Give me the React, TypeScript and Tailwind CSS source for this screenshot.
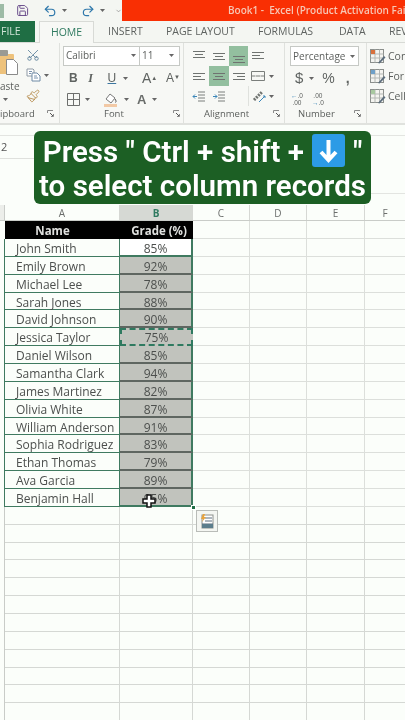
import { Save, Undo2, Redo2, Scissors, Paintbrush, ChevronDown } from 'lucide-react'

const students = [
  ['John Smith', '85%'],
  ['Emily Brown', '92%'],
  ['Michael Lee', '78%'],
  ['Sarah Jones', '88%'],
  ['David Johnson', '90%'],
  ['Jessica Taylor', '75%'],
  ['Daniel Wilson', '85%'],
  ['Samantha Clark', '94%'],
  ['James Martinez', '82%'],
  ['Olivia White', '87%'],
  ['William Anderson', '91%'],
  ['Sophia Rodriguez', '83%'],
  ['Ethan Thomas', '79%'],
  ['Ava Garcia', '89%'],
  ['Benjamin Hall', '95%'],
]

const emptyRows = Array.from({ length: 12 })

function Caret({ className = '' }: { className?: string }) {
  return (
    <svg width="5" height="3" viewBox="0 0 5 3" className={`shrink-0 ${className}`}>
      <path d="M0 0h5L2.5 3z" fill="#666" />
    </svg>
  )
}

function Launcher() {
  return (
    <svg width="7" height="7" viewBox="0 0 7 7">
      <path d="M.5 3V.5H6M6.5 4v2.5H4" fill="none" stroke="#8a8a8a" />
      <path d="M3 3l3 3" stroke="#555" />
    </svg>
  )
}

// rows of text lines, the alignment buttons in the ribbon
function Lines({ align = 'center', rows = 3, y = 4 }: { align?: string; rows?: number; y?: number }) {
  const widths = align === 'full' ? [12, 12, 12, 12] : [12, 8, 12, 8]
  return (
    <svg width="14" height="14" viewBox="0 0 14 14">
      {widths.slice(0, rows).map((w, i) => {
        const x = align === 'right' ? 13 - w : align === 'left' || align === 'full' ? 1 : 7 - w / 2
        return <rect key={i} x={x} y={y + i * 3} width={w} height="1" fill="#6f7370" />
      })}
    </svg>
  )
}

function Indent({ flip = false }: { flip?: boolean }) {
  return (
    <svg width="14" height="14" viewBox="0 0 14 14">
      <path d="M6 3h7M6 6h7M6 9h7M6 12h7" stroke="#7b7f7c" />
      <path d={flip ? 'M1 7.5h4M3 5.5l2 2-2 2' : 'M1 7.5h4M3 5.5l-2 2 2 2'} fill="none" stroke="#3c86b8" />
    </svg>
  )
}

function StyleIcon({ tone }: { tone: string }) {
  return (
    <svg width="16" height="15" viewBox="0 0 16 15" className="shrink-0">
      <rect x=".5" y=".5" width="13" height="13" fill="#f4f4f0" stroke="#8b8f8c" />
      <path d="M.5 5h13M.5 9h13M5 .5v13M9.500 .5v13" stroke="#b4b7b4" />
      <rect x="1" y="1" width="4" height="4" fill={tone} />
      <path d="M8 14l6-7 1.500 1.500-6 6z" fill="#5c6d7c" />
    </svg>
  )
}

function PasteIcon() {
  return (
    <svg width="20" height="28" viewBox="0 0 20 28">
      <rect x="-6" y="5" width="20" height="20" rx="1" fill="#eec27c" />
      <rect x="-2" y="1" width="10" height="6" rx="1" fill="#9a9a94" />
      <path d="M6.500 10.500h7l4 4v11h-11z" fill="#fff" stroke="#8a8a8a" />
    </svg>
  )
}

function CopyIcon() {
  return (
    <svg width="15" height="14" viewBox="0 0 15 14">
      <path d="M1 1h6l1 1v6H1z" fill="#fff" stroke="#8f9aa5" />
      <path d="M6 5h5l3 3v5H6z" fill="#fff" stroke="#6f8aa5" />
      <path d="M3 3.500h3M3 5.500h2M8 8h3M8 10h4" stroke="#7b93ad" />
    </svg>
  )
}

function BordersIcon() {
  return (
    <svg width="13" height="13" viewBox="0 0 13 13">
      <path d="M.5.5h12v12H.5zM6.500.5v12M.5 6.500h12" fill="none" stroke="#6d6f6d" />
    </svg>
  )
}

function FillIcon() {
  return (
    <svg width="15" height="15" viewBox="0 0 15 15">
      <path d="M3 7l4-5 5 4-4 5z" fill="#fff" stroke="#7a7a7a" />
      <path d="M12 7c1 1.500 1.500 2.500.5 3.500" fill="none" stroke="#555" />
      <rect x="1" y="12" width="13" height="3" fill="#f2c9a5" />
    </svg>
  )
}

function OrientationIcon() {
  return (
    <svg width="15" height="15" viewBox="0 0 15 15">
      <path d="M2 11L10 3" stroke="#6f7370" strokeWidth="3" strokeDasharray="2 1" />
      <path d="M7 13l6-6M11 7h2v2" fill="none" stroke="#3c86b8" />
    </svg>
  )
}

function DownArrowTile() {
  return (
    <svg width="33" height="33" viewBox="0 0 33 33" className="mx-[8px] inline-block align-[-5px]">
      <rect width="33" height="33" rx="3" fill="#2c9be6" />
      <path d="M16.500 6v19M9 18l7.500 8 7.500-8" fill="none" stroke="#fff" strokeWidth="4" />
    </svg>
  )
}

function Ribbon() {
  return (
    <div className="flex h-[82px] border-b-2 border-[#e0e2de] bg-[#f7f8f5] text-[#5d605e]">
      {/* Clipboard */}
      <div className="flex w-[60px] shrink-0 flex-col border-r border-[#dfe1dd]">
        <div className="flex h-[66px]">
          <div className="flex w-[26px] flex-col pt-[6px] leading-none">
            <PasteIcon />
            <span className="mt-[4px] text-[10px]">aste</span>
            <Caret className="ml-[3px] mt-[7px]" />
          </div>
          <div className="flex flex-col gap-[6px] pt-[5px]">
            <Scissors size={14} strokeWidth={1.300} color="#47708f" className="-scale-x-100 rotate-90" />
            <div className="flex items-center gap-[3px]">
              <CopyIcon />
              <Caret />
            </div>
            <Paintbrush size={14} strokeWidth={1.500} color="#b58a4a" className="mt-[1px]" />
          </div>
        </div>
        <div className="flex items-center justify-between pr-[5px] text-[9.500px] leading-none">
          <span>ipboard</span>
          <Launcher />
        </div>
      </div>

      {/* Font */}
      <div className="flex w-[124px] shrink-0 flex-col border-r border-[#dfe1dd] pl-[3px] pr-[3px]">
        <div className="flex h-[66px] flex-col">
          <div className="mt-[3px] flex h-[20px] w-[117px] items-center border border-[#c6c9c5] bg-white text-[10px]">
            <span className="w-[67px] pl-[2px]">Calibri</span>
            <Caret className="mr-[3px]" />
            <span className="flex h-full flex-1 items-center justify-between border-l border-[#c6c9c5] px-[2px] pr-[5px]">
              11
              <Caret />
            </span>
          </div>
          <div className="mt-[3px] flex h-[19px] items-center font-['Liberation_Sans',sans-serif] text-[12px] text-[#5f6361]">
            <b className="ml-[6px] w-[20px]">B</b>
            <i className="w-[20px] font-['Liberation_Serif',serif] font-bold">I</i>
            <span className="w-[16px] underline decoration-[#3c76a0]">U</span>
            <Caret className="mr-[14px]" />
            <span className="w-[25px] text-[14px]">A<sup className="text-[6px]">▲</sup></span>
            <span className="text-[12px]">A<sup className="text-[6px]">▼</sup></span>
          </div>
          <div className="mt-[2px] flex h-[20px] items-center">
            <div className="ml-[4px] mr-[5px]"><BordersIcon /></div>
            <Caret className="mr-[13px]" />
            <FillIcon />
            <Caret className="ml-[6px] mr-[8px]" />
            <span className="font-['Liberation_Sans',sans-serif] text-[13px] font-bold text-[#6a6d6b]">A</span>
            <Caret className="ml-[6px]" />
          </div>
        </div>
        <div className="flex items-center text-[9.500px] leading-none">
          <span className="ml-[41px] flex-1">Font</span>
          <span className="mr-[0px]"><Launcher /></span>
        </div>
      </div>

      {/* Alignment */}
      <div className="flex w-[101px] shrink-0 flex-col border-r border-[#dfe1dd] pl-[5px] pr-[4px]">
        <div className="grid h-[60px] grid-cols-[20px_20px_19px_1fr] grid-rows-[20px_20px_20px] pt-[3px] [&>*]:flex [&>*]:items-center [&>*]:justify-center">
          <div><Lines y={2} /></div>
          <div><Lines y={4} /></div>
          <div className="bg-[#93bf9f]"><Lines y={7} /></div>
          <div className="!justify-start pl-[3px]"><Lines align="left" y={3} /></div>
          <div><Lines align="left" /></div>
          <div className="bg-[#93bf9f]"><Lines /></div>
          <div><Lines align="right" /></div>
          <div className="!justify-start gap-[4px] pl-[3px]">
            <svg width="14" height="14" viewBox="0 0 14 14"><path d="M.5 2.500h13v9H.5zM.5 7h4M9.500 7h4M5 7h4" fill="none" stroke="#7a7e7b" /></svg>
            <Caret />
          </div>
          <div><Indent /></div>
          <div><Indent flip /></div>
          <div />
          <div className="!justify-start gap-[2px] border-l border-[#dfe1dd] pl-[3px]">
            <OrientationIcon />
            <Caret />
          </div>
        </div>
        <div className="mt-[6px] flex items-center justify-between text-[9.500px] leading-none">
          <span className="ml-[15px]">Alignment</span>
          <Launcher />
        </div>
      </div>

      {/* Number */}
      <div className="flex w-[82px] shrink-0 flex-col border-r border-[#dfe1dd] pl-[5px] pr-[5px]">
        <div className="flex h-[66px] flex-col">
          <div className="mt-[3px] flex h-[20px] w-[69px] items-center justify-between border border-[#c6c9c5] bg-white pl-[2px] pr-[3px] text-[10px]">
            Percentage
            <Caret />
          </div>
          <div className="mt-[2px] flex h-[20px] items-center font-['Liberation_Sans',sans-serif] text-[14px] text-[#5f6361]">
            <span className="ml-[5px] mr-[6px] text-[15px]">$</span>
            <Caret className="mr-[8px]" />
            <span className="mr-[11px]">%</span>
            <span className="font-bold">,</span>
          </div>
          <div className="mt-[1px] flex h-[20px] items-center gap-[9px] pl-[1px] font-['Liberation_Sans',sans-serif] text-[6.500px] leading-[7px]">
            <span className="text-center"><span className="text-[#3c86b8]">←</span>.0<br />.00</span>
            <span className="text-center">.00<br /><span className="text-[#3c86b8]">→</span>.0</span>
          </div>
        </div>
        <div className="flex items-center justify-between text-[9.500px] leading-none">
          <span className="ml-[8px]">Number</span>
          <Launcher />
        </div>
      </div>

      {/* Styles, cut off by the window edge */}
      <div className="flex flex-1 flex-col gap-[5px] overflow-hidden pl-[3px] pt-[6px] text-[10.500px] leading-none">
        <div className="flex items-center gap-[2px]"><StyleIcon tone="#d9703c" />Con</div>
        <div className="flex items-center gap-[2px]"><StyleIcon tone="#6fa0c8" />For</div>
        <div className="flex items-center gap-[2px]"><StyleIcon tone="#a8c8a0" />Cell</div>
      </div>
    </div>
  )
}

export default function App() {
  return (
    <div className="relative h-[720px] w-[405px] overflow-hidden bg-[#fbfefa] font-['Open_Sans',sans-serif] blur-[0.35px]">
      {/* quick access + title */}
      <div className="flex h-[21px] bg-[#f4f6f2]">
        <div className="flex w-[122px] shrink-0 items-center">
          <div className="h-[14px] w-[5px] bg-[#9dbba6]" />
          <Save size={15} strokeWidth={1.800} color="#6b4f8c" className="ml-[12px]" />
          <Undo2 size={16} strokeWidth={2} color="#2f78ab" className="ml-[13px]" />
          <Caret className="ml-[5px]" />
          <Redo2 size={16} strokeWidth={2} color="#2f78ab" className="ml-[14px]" />
          <Caret className="ml-[5px]" />
          <ChevronDown size={8} color="#777" className="ml-[10px]" />
        </div>
        <div className="flex-1 overflow-hidden whitespace-nowrap bg-[#f92f03] pl-[106px] text-[10px] font-semibold leading-[21px] text-[#f7c6b4]">
          Book1 -&nbsp; Excel (Product Activation Fai
        </div>
      </div>

      {/* tabs */}
      <div className="flex h-[22px] items-center whitespace-nowrap border-b border-[#d8dad6] bg-[#f4f6f2] text-[10.500px] text-[#5f6361]">
        <div className="flex h-[21px] w-[35px] shrink-0 items-center self-start bg-[#1f6e44] pl-[1px] text-[#cfe3d6]">FILE</div>
        <div className="ml-[4px] flex h-[22px] w-[55px] shrink-0 items-center justify-center self-start border-x border-t border-[#d8dad6] bg-[#f7f8f5] text-[#2f7a60]">HOME</div>
        <span className="ml-[14px] w-[58px] shrink-0">INSERT</span>
        <span className="w-[92px] shrink-0">PAGE LAYOUT</span>
        <span className="w-[81px] shrink-0">FORMULAS</span>
        <span className="w-[50px] shrink-0">DATA</span>
        <span>REV</span>
      </div>

      <Ribbon />

      {/* formula bar area */}
      <div className="h-[80px] pt-[10px]">
        <div className="flex border-t border-[#e3e5e1]">
          <div className="flex h-[23px] w-[34px] shrink-0 items-center border-b border-[#dfe1dd] pl-[1px] text-[11px] text-[#555]">2</div>
          <div className="h-[58px] flex-1 border-b border-[#e3e5e1]" />
        </div>
      </div>

      {/* column headers */}
      <div className="flex h-[16px] border-b border-[#c9ccc8] text-center text-[10px] leading-[16px] text-[#6b6e6c]">
        <div className="w-[5px] shrink-0 border-r border-[#c9ccc8] bg-[#eceeea]" />
        <div className="w-[115px] shrink-0 border-r border-[#d6d8d4]">A</div>
        <div className="w-[73px] shrink-0 border-r border-[#d6d8d4] bg-[#d6d9d4] font-bold text-[#2f7a60]">B</div>
        <div className="w-[57px] shrink-0 border-r border-[#d6d8d4]">C</div>
        <div className="w-[57px] shrink-0 border-r border-[#d6d8d4]">D</div>
        <div className="w-[58px] shrink-0 border-r border-[#d6d8d4]">E</div>
        <div className="flex-1">F</div>
      </div>

      {/* sheet */}
      <div className="text-[12px] text-[#4c4f4d]">
        <div className="flex h-[18px] pl-[5px] text-center text-[11.500px] font-bold leading-[19px]">
          <div className="w-[115px] shrink-0 bg-black pr-[20px] text-[#dfe0de]">Name</div>
          <div className="w-[73px] shrink-0 bg-black pl-[5px] text-[#dfe0de]">Grade (%)</div>
          <div className="w-[57px] shrink-0 border-r border-b border-[#dcdfdb]" />
          <div className="w-[57px] shrink-0 border-r border-b border-[#dcdfdb]" />
          <div className="w-[58px] shrink-0 border-r border-b border-[#dcdfdb]" />
          <div className="flex-1 border-b border-[#dcdfdb]" />
        </div>

        {students.map(([name, grade], i) => (
          <div key={name} className="flex h-[17.870px] leading-[19px]">
            <div className="w-[5px] shrink-0 border-r border-[#3f7a60]" />
            <div className="w-[115px] shrink-0 border-r border-b border-[#3f7a60] pl-[11px] whitespace-nowrap">{name}</div>
            <div
              className={
                i === 0
                  ? 'w-[73px] shrink-0 border-r-2 border-b-2 border-[#3f7a60] bg-white text-center'
                  : i === 5
                    ? 'w-[73px] shrink-0 border-2 border-dashed border-[#2f7a60] bg-[#c1c3bd] text-center leading-[15px]'
                    : `w-[73px] shrink-0 border-r-2 border-[#3f7a60] bg-[#c1c3bd] text-center ${i === 14 ? 'border-b-2' : 'border-b-2 border-b-[#5f6661]'}`
              }
            >
              {grade}
            </div>
            <div className="w-[57px] shrink-0 border-r border-b border-[#dcdfdb]" />
            <div className="w-[57px] shrink-0 border-r border-b border-[#dcdfdb]" />
            <div className="w-[58px] shrink-0 border-r border-b border-[#dcdfdb]" />
            <div className="flex-1 border-b border-[#dcdfdb]" />
          </div>
        ))}

        {emptyRows.map((_, i) => (
          <div key={i} className="flex h-[17.870px]">
            <div className="w-[5px] shrink-0 border-r border-[#c9ccc8]" />
            <div className="w-[115px] shrink-0 border-r border-b border-[#d5d8d4]" />
            <div className="w-[73px] shrink-0 border-r border-b border-[#d5d8d4]" />
            <div className="w-[57px] shrink-0 border-r border-b border-[#d5d8d4]" />
            <div className="w-[57px] shrink-0 border-r border-b border-[#d5d8d4]" />
            <div className="w-[58px] shrink-0 border-r border-b border-[#d5d8d4]" />
            <div className="flex-1 border-b border-[#d5d8d4]" />
          </div>
        ))}
      </div>

      {/* caption over the sheet */}
      <div className="absolute left-[34px] top-[131px] flex h-[73px] w-[337px] flex-col items-center justify-center whitespace-nowrap rounded-[6px] bg-[#1c5f24] font-['Roboto',sans-serif] text-[29.500px] font-semibold leading-[35px] text-white">
        <div className="mt-[2px]">Press " Ctrl + shift +<DownArrowTile />"</div>
        <div className="-mt-[1px]">to select column records</div>
      </div>

      {/* fill handle */}
      <div className="absolute left-[191px] top-[505px] h-[5px] w-[5px] border border-white bg-[#1f6e44]" />

      {/* quick analysis button */}
      <div className="absolute left-[196px] top-[510px] flex h-[22px] w-[22px] items-center justify-center border border-[#b9bcb8] bg-[#f4f6f2]">
        <svg width="16" height="16" viewBox="0 0 16 16">
          <rect x="3" y="2" width="11" height="13" fill="#fff" stroke="#8b8f8c" />
          <path d="M6 5h7M6 8h7M3 11h11" stroke="#5c6d7c" />
          <rect x="3" y="11" width="11" height="4" fill="#5c7d8c" />
          <path d="M4 1L2 6h2L3 9l4-5H5l1-3z" fill="#e8a33c" />
        </svg>
      </div>

      {/* excel cross cursor */}
      <svg width="14" height="14" viewBox="0 0 14 14" className="absolute left-[142px] top-[494px]">
        <path d="M5 1h4v4h4v4H9v4H5V9H1V5h4z" fill="#fff" stroke="#111" strokeWidth="1.500" />
      </svg>
    </div>
  )
}
